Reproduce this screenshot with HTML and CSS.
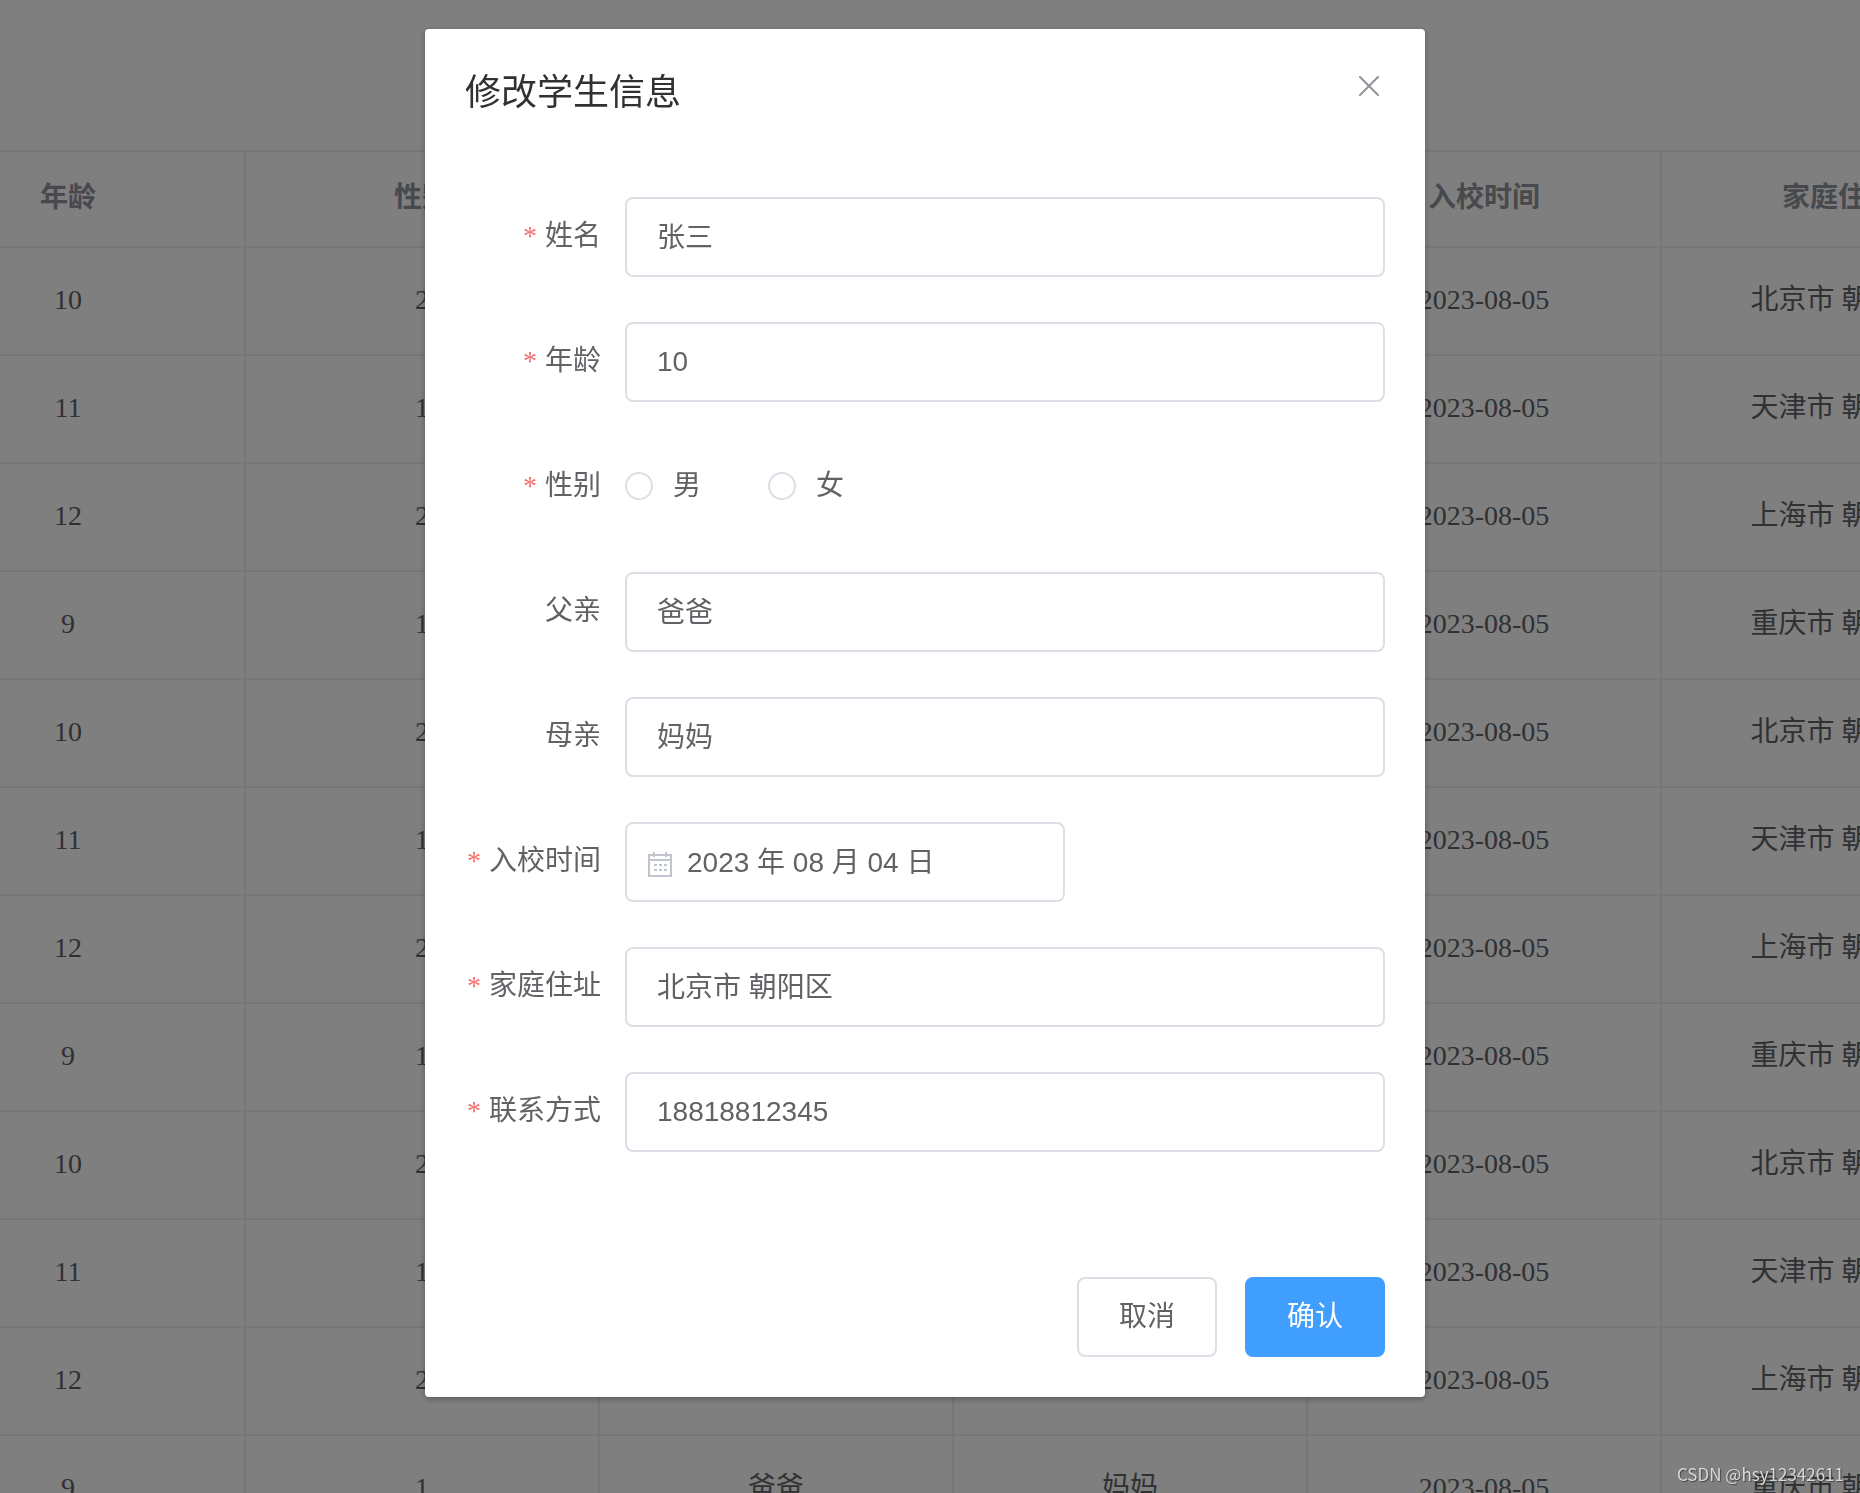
FILE: index.html
```html
<!DOCTYPE html>
<html lang="zh-CN">

<head>
    <meta charset="UTF-8">
    <title>学生信息</title>
    <link rel="stylesheet" href="styles.css">
</head>

<body>
    <main class="page">
        <table class="students">
            <thead>
                <tr>
                    <th>年龄</th>
                    <th>性别</th>
                    <th>父亲</th>
                    <th>母亲</th>
                    <th>入校时间</th>
                    <th>家庭住址</th>
                </tr>
            </thead>
            <tbody></tbody>
        </table>
    </main>

    <template>
        <tr>
            <td class="age"></td>
            <td class="sex"></td>
            <td>爸爸</td>
            <td>妈妈</td>
            <td>2023-08-05</td>
            <td class="address"></td>
        </tr>
    </template>

    <div class="overlay">
        <section class="dialog" role="dialog" aria-labelledby="title">
            <header class="dialog-header">
                <h1 id="title">修改学生信息</h1>
                <button class="close" type="button" aria-label="关闭">
                    <svg viewBox="0 0 20 20" width="20" height="20">
                        <path d="M1 1 L19 19 M19 1 L1 19" />
                    </svg>
                </button>
            </header>

            <form id="student" class="dialog-body">
                <div class="item required">
                    <label for="name">姓名</label>
                    <input class="text zh" id="name" type="text" value="张三">
                </div>
                <div class="item required">
                    <label for="age">年龄</label>
                    <input class="text" id="age" type="text" value="10">
                </div>
                <div class="item required" role="radiogroup" aria-labelledby="sex-label">
                    <span class="label" id="sex-label">性别</span>
                    <div class="radios">
                        <label class="radio"><input type="radio" name="sex" value="1">男</label>
                        <label class="radio"><input type="radio" name="sex" value="2">女</label>
                    </div>
                </div>
                <div class="item">
                    <label for="father">父亲</label>
                    <input class="text zh" id="father" type="text" value="爸爸">
                </div>
                <div class="item">
                    <label for="mother">母亲</label>
                    <input class="text zh" id="mother" type="text" value="妈妈">
                </div>
                <div class="item required">
                    <label for="date">入校时间</label>
                    <div class="date">
                        <input class="text zh" id="date" type="text" value="2023 年 08 月 04 日">
                        <svg class="calendar" viewBox="0 0 24 26" width="24" height="26">
                            <path d="M1 4 H23 V25 H1 Z M1 9 H23 M6 1 V6 M18 1 V6" />
                            <path d="M6 14 H9 M11 14 H14 M16 14 H19 M6 19 H9 M11 19 H14 M16 19 H19" />
                        </svg>
                    </div>
                </div>
                <div class="item required">
                    <label for="address">家庭住址</label>
                    <input class="text zh" id="address" type="text" value="北京市 朝阳区">
                </div>
                <div class="item required">
                    <label for="phone">联系方式</label>
                    <input class="text" id="phone" type="text" value="18818812345">
                </div>
            </form>

            <footer class="dialog-footer">
                <button class="btn" type="button">取消</button>
                <button class="btn primary" type="submit" form="student">确认</button>
            </footer>
        </section>
    </div>

    <p class="watermark">CSDN @hsy12342611</p>

    <script>
        const tbody = document.querySelector("tbody");
        const temp = document.querySelector("template");
        const students = [
            { age: 10, sex: 2, address: "北京市 朝阳区" },
            { age: 11, sex: 1, address: "天津市 朝阳区" },
            { age: 12, sex: 2, address: "上海市 朝阳区" },
            { age: 9, sex: 1, address: "重庆市 朝阳区" }
        ];

        for (let i = 0; i < 12; i++) {
            const student = students[i % students.length];
            const klon = temp.content.cloneNode(true);
            klon.querySelector(".age").textContent = student.age;
            klon.querySelector(".sex").textContent = student.sex;
            klon.querySelector(".address").textContent = student.address;
            tbody.appendChild(klon);
        }
    </script>
</body>

</html>
```
FILE: styles.css
```css
* {
    box-sizing: border-box;
}

body {
    margin: 0;
    font-family: "Liberation Serif", "Noto Sans CJK SC", serif;
    font-size: 28px;
    color: #606266;
}

.page {
    height: 100vh;
    overflow: hidden;
    padding-top: 150px;
}

/* the table is scrolled a little to the right */
.students {
    width: 2124px;
    margin-left: -108px;
    table-layout: fixed;
    border-collapse: separate;
    border-spacing: 0;
    border-top: 2px solid #ebeef5;
}

.students th,
.students td {
    height: 108px;
    padding: 0 20px 2px;
    text-align: center;
    line-height: 46px;
    border-right: 2px solid #ebeef5;
    border-bottom: 2px solid #ebeef5;
}

.students th {
    height: 96px;
    color: #909399;
}

.overlay {
    position: fixed;
    top: 0;
    right: 0;
    bottom: 0;
    left: 0;
    overflow: auto;
    padding-right: 10px;
    background-color: rgba(0, 0, 0, .5);
}

.dialog {
    width: 1000px;
    max-width: 96%;
    margin: 29px auto;
    background-color: #fff;
    border-radius: 4px;
    box-shadow: 0 2px 6px rgba(0, 0, 0, .3);
}

.dialog-header {
    display: flex;
    justify-content: space-between;
    align-items: flex-start;
    padding: 40px 40px 20px;
}

h1 {
    margin: 0;
    font-size: 36px;
    font-weight: normal;
    line-height: 48px;
    color: #303133;
}

.close {
    width: 32px;
    height: 34px;
    padding: 0;
    border: 0;
    background: none;
}

.close svg {
    display: block;
    margin: 0 auto;
    fill: none;
    stroke: #909399;
    stroke-width: 2;
    stroke-linecap: round;
}

.dialog-body {
    padding: 60px 40px;
}

.item {
    display: flex;
    align-items: flex-start;
    height: 80px;
    margin-bottom: 45px;
    line-height: 78px;
}

.item > label,
.label {
    flex: none;
    width: 160px;
    padding-right: 24px;
    text-align: right;
}

.required > label::before,
.required > .label::before {
    content: "*";
    margin-right: 8px;
    color: #f56c6c;
}

.text {
    width: 100%;
    height: 80px;
    padding: 0 30px;
    border: 2px solid #dcdfe6;
    border-radius: 8px;
    background-color: #fff;
    color: #606266;
    font-family: "Liberation Sans", "Noto Sans CJK SC", sans-serif;
    font-size: 28px;
}

/* Chinese glyphs sit low in an input */
.zh {
    padding-bottom: 5px;
}

.radios {
    display: flex;
    gap: 67px;
}

.radio {
    display: flex;
    align-items: center;
    gap: 20px;
}

.radio input {
    appearance: none;
    width: 28px;
    height: 28px;
    margin: 0;
    border: 2px solid #dcdfe6;
    border-radius: 50%;
    background-color: #fff;
}

.radio input:checked {
    border: 8px solid #409eff;
}

.date {
    position: relative;
    width: 440px;
}

.date .text {
    display: block;
    padding-left: 60px;
}

.calendar {
    position: absolute;
    top: 29px;
    left: 23px;
    fill: none;
    stroke: #c0c4cc;
    stroke-width: 2;
}

.dialog-footer {
    display: flex;
    justify-content: flex-end;
    gap: 28px;
    padding: 20px 40px 40px;
}

.btn {
    width: 140px;
    height: 80px;
    padding: 0;
    border: 2px solid #dcdfe6;
    border-radius: 8px;
    background-color: #fff;
    color: #606266;
    font-family: "Liberation Sans", "Noto Sans CJK SC", sans-serif;
    font-size: 28px;
    line-height: 32px;
}

.primary {
    border-color: #409eff;
    background-color: #409eff;
    color: #fff;
}

.watermark {
    position: fixed;
    right: 16px;
    bottom: 7px;
    margin: 0;
    font-family: "Noto Sans CJK SC", sans-serif;
    font-size: 17px;
    line-height: 24px;
    color: #d8d8d8;
    text-shadow: 1px 1px 1px #444;
}
```
